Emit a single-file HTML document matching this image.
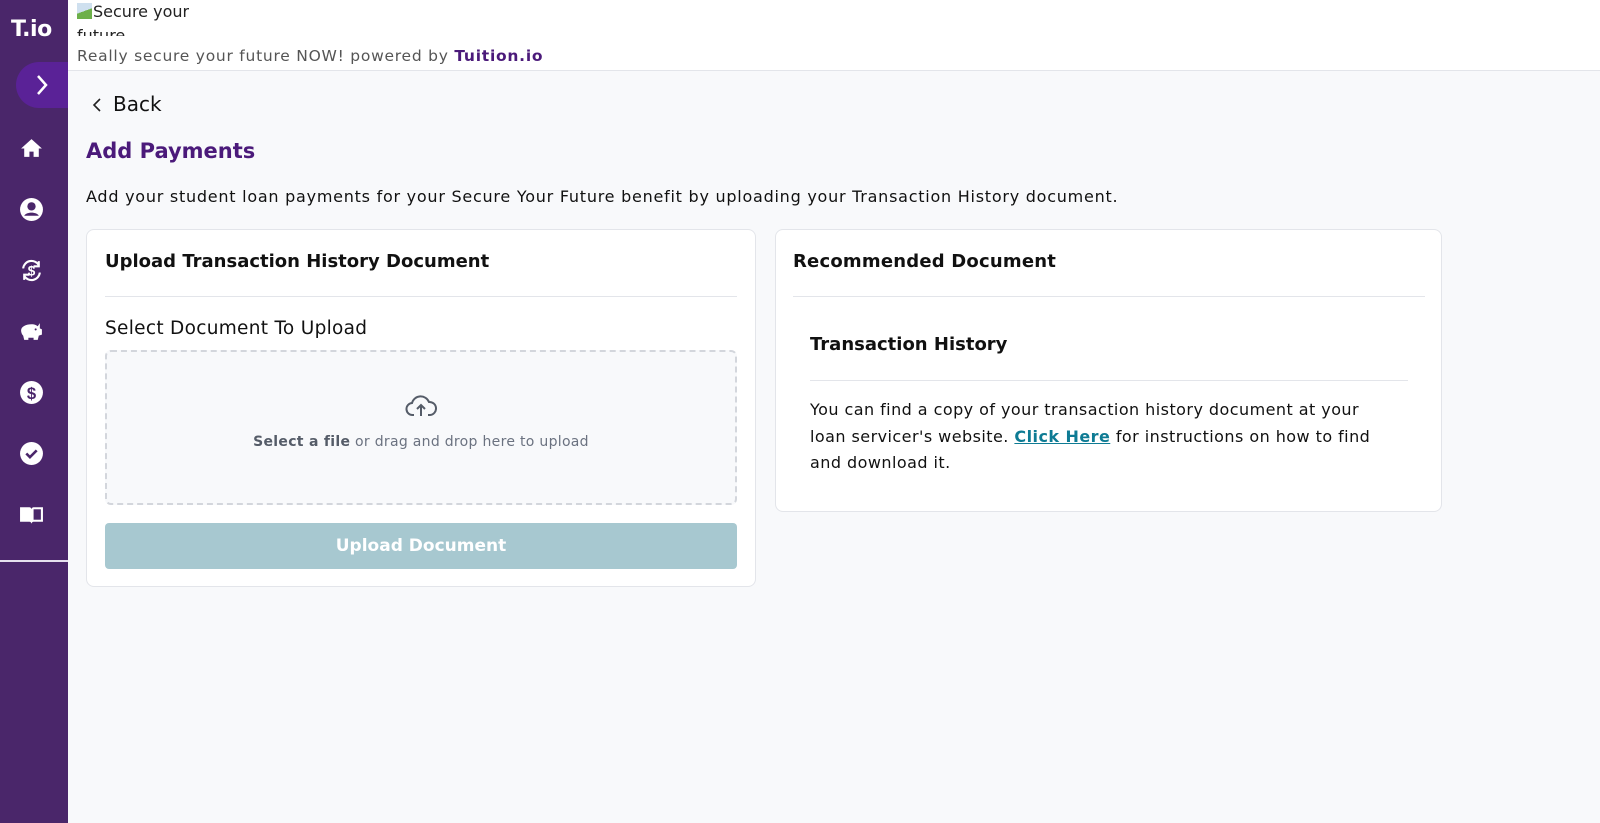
<!DOCTYPE html>
<html><head><meta charset="utf-8"><style>
*{box-sizing:border-box;margin:0;padding:0}
body{width:1600px;height:823px;overflow:hidden;font-family:"DejaVu Sans","Liberation Sans",sans-serif;background:#f8f9fb;position:relative;color:#111}
.side{position:absolute;left:0;top:0;width:68px;height:823px;background:#4a266a}
.logo{position:absolute;left:11px;top:17px;color:#fff;font-weight:bold;font-size:22px;letter-spacing:-0.5px}
.pill{position:absolute;left:16px;top:62px;width:52px;height:46px;background:#5a2297;border-radius:23px 0 0 23px}
.ic{position:absolute;left:19px;width:25px;height:25px}
.hr{position:absolute;left:0;top:560px;width:68px;height:2px;background:#e6e0ee}
.top{position:absolute;left:68px;top:0;right:0;height:71px;background:#fff;border-bottom:1px solid #e3e5ea}
.card{position:absolute;background:#fff;border:1px solid #e3e5ea;border-radius:8px}
.t{position:absolute;white-space:nowrap}
</style></head><body>
<div class="side">
<div class="logo">T.io</div>
<div class="pill"><svg style="position:absolute;left:19px;top:12px" width="14" height="22" viewBox="0 0 14 22"><path d="M3 2l8 9-8 9" fill="none" stroke="#fff" stroke-width="2.5"/></svg></div>
<svg class="ic" style="top:136px" viewBox="0 0 24 24"><path d="M12 3L2 12h3v8h5v-5h4v5h5v-8h3z" fill="#fff"/></svg>
<svg class="ic" style="top:197px" viewBox="0 0 24 24"><circle cx="12" cy="12" r="11" fill="#fff"/><circle cx="12" cy="9" r="4" fill="#4a266a"/><path d="M5 18c2-4 12-4 14 0" fill="#4a266a"/></svg>
<svg class="ic" style="top:258px" viewBox="0 0 24 24"><path d="M4 10a8 8 0 0 1 15-3M20 14a8 8 0 0 1-15 3" fill="none" stroke="#fff" stroke-width="2"/><path d="M19 3v5h-5M5 21v-5h5" fill="none" stroke="#fff" stroke-width="2"/><text x="12" y="17" font-size="13" font-weight="bold" fill="#fff" text-anchor="middle" font-family="Liberation Sans">$</text></svg>
<svg class="ic" style="top:319px" viewBox="0 0 24 24"><path d="M2 11c0-4 5-6 10-6 3 0 5 1 6 2l2-3v5l2 1v5l-3 1-1 4h-4v-2h-5v2H5l-1-4c-1-1-2-3-2-5z" fill="#fff"/><circle cx="16" cy="10" r="1" fill="#4a266a"/></svg>
<svg class="ic" style="top:380px" viewBox="0 0 24 24"><circle cx="12" cy="12" r="11" fill="#fff"/><text x="12" y="18" font-size="16" font-weight="bold" fill="#4a266a" text-anchor="middle" font-family="Liberation Sans">$</text></svg>
<svg class="ic" style="top:441px" viewBox="0 0 24 24"><circle cx="12" cy="12" r="11" fill="#fff"/><path d="M7 12l3.5 3.5L17 9" fill="none" stroke="#4a266a" stroke-width="2.5"/></svg>
<svg class="ic" style="top:502px" viewBox="0 0 24 24"><path d="M1 5h9c1 0 2 1 2 2v14c0-1-1-2-2-2H1zM23 5h-9c-1 0-2 1-2 2v14c0-1 1-2 2-2h9z" fill="#fff"/><path d="M14 7h7v10h-7z" fill="#4a266a"/></svg>
<div class="hr"></div>
</div>
<div class="top">
<div class="t" style="left:9px;top:0px;font-size:16px;color:#222;line-height:24px;height:36px;overflow:hidden"><span style="display:inline-block;width:15px;height:16px;background:linear-gradient(160deg,#cfe0ef 50%,#6db04a 50%);vertical-align:-2px;margin-right:1px"></span>Secure your<br>future</div>
<div class="t" style="left:9px;top:47px;font-size:15.5px;color:#555;letter-spacing:0.75px">Really secure your future NOW! powered by <b style="color:#4b1a7a">Tuition.io</b></div>
</div>
<svg style="position:absolute;left:92px;top:97px" width="10" height="16" viewBox="0 0 10 16"><path d="M8 2L2 8l6 6" fill="none" stroke="#222" stroke-width="1.6"/></svg>
<div class="t" style="left:113px;top:92px;font-size:20px">Back</div>
<div class="t" style="left:86px;top:139px;font-size:21px;font-weight:bold;color:#4b1a7a">Add Payments</div>
<div class="t" style="left:86px;top:187px;font-size:16px;letter-spacing:0.75px">Add your student loan payments for your Secure Your Future benefit by uploading your Transaction History document.</div>
<div class="card" style="left:86px;top:229px;width:670px;height:358px">
<div class="t" style="left:18px;top:21px;font-size:18px;font-weight:bold">Upload Transaction History Document</div>
<div style="position:absolute;left:18px;top:66px;width:632px;height:1px;background:#e3e5ea"></div>
<div class="t" style="left:18px;top:88px;font-size:18.5px;letter-spacing:0.3px">Select Document To Upload</div>
<div style="position:absolute;left:18px;top:120px;width:632px;height:155px;border:2px dashed #d3d6dc;border-radius:6px;background:#f8f9fb"></div>
<svg style="position:absolute;left:318px;top:163px" width="32" height="26" viewBox="0 0 32 26"><path d="M9 22H8a6 6 0 0 1-1-12 9 9 0 0 1 17-1 6.5 6.5 0 0 1 1 13h-2" fill="none" stroke="#555c68" stroke-width="2"/><path d="M16 23V12M12 16l4-4 4 4" fill="none" stroke="#555c68" stroke-width="2"/></svg>
<div class="t" style="left:0;width:668px;text-align:center;top:204px;font-size:14px;color:#6b7280;letter-spacing:0.3px"><b style="color:#555c68">Select a file</b> or drag and drop here to upload</div>
<div style="position:absolute;left:18px;top:293px;width:632px;height:46px;background:#a7c8d0;border-radius:4px;color:#fff;font-weight:bold;font-size:17px;text-align:center;line-height:46px">Upload Document</div>
</div>
<div class="card" style="left:775px;top:229px;width:667px;height:283px">
<div class="t" style="left:17px;top:21px;font-size:18px;font-weight:bold;letter-spacing:0.2px">Recommended Document</div>
<div style="position:absolute;left:17px;top:66px;width:632px;height:1px;background:#e3e5ea"></div>
<div class="t" style="left:34px;top:104px;font-size:18px;font-weight:bold">Transaction History</div>
<div style="position:absolute;left:34px;top:150px;width:598px;height:1px;background:#e3e5ea"></div>
<div style="position:absolute;left:34px;top:167px;width:570px;font-size:16px;line-height:26.5px;letter-spacing:0.45px">You can find a copy of your transaction history document at your loan servicer's website. <b style="color:#0e7b94;text-decoration:underline">Click Here</b> for instructions on how to find and download it.</div>
</div>
</body></html>
